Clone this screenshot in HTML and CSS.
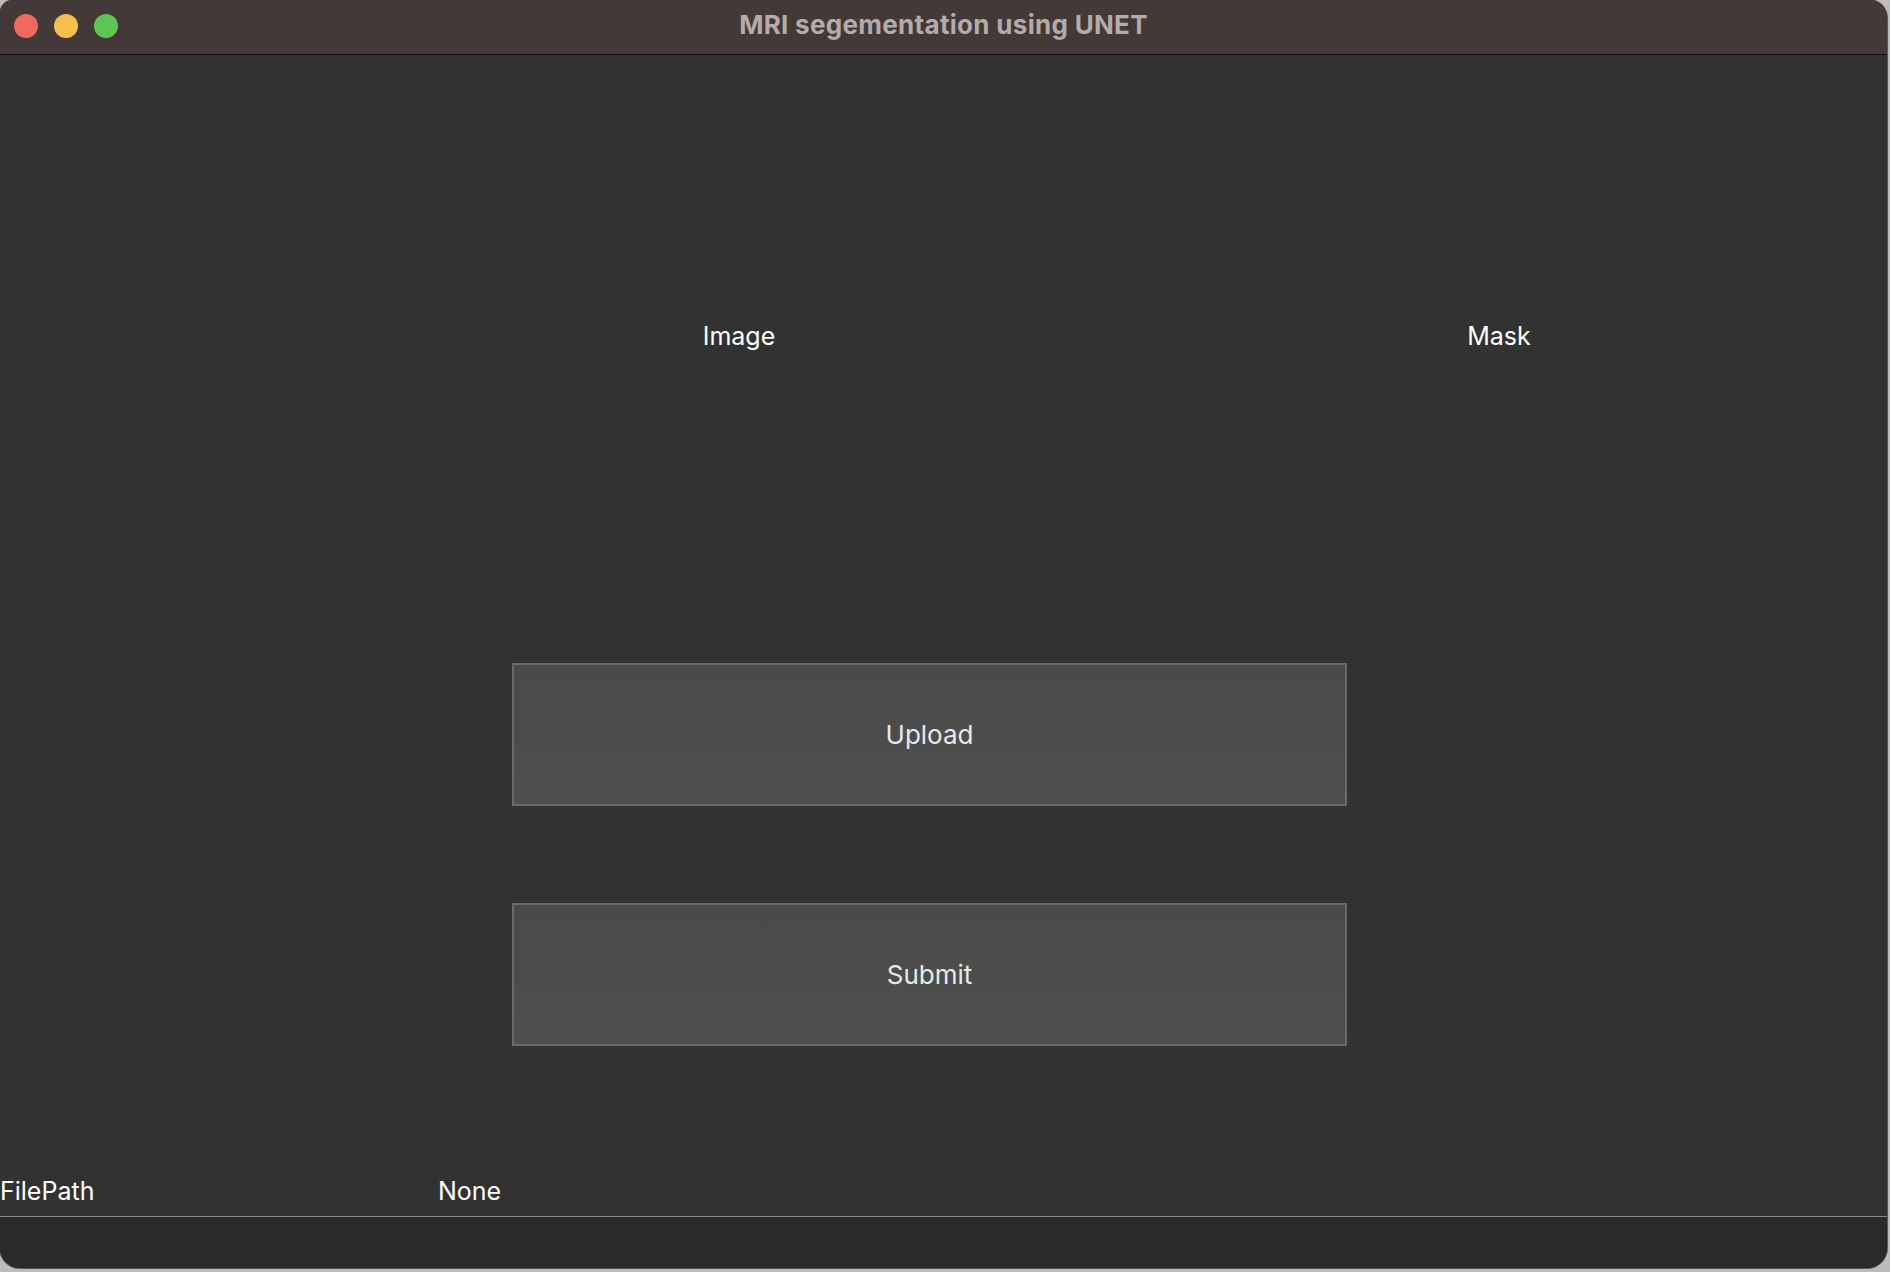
FILE: index.html
```html
<!DOCTYPE html>
<html>
<head>
<meta charset="utf-8">
<title>MRI segementation using UNET</title>
<link rel="stylesheet" href="styles.css">
</head>
<body>
<div class="window">
  <div class="titlebar">
    <div class="lights">
      <span class="light red"></span>
      <span class="light yellow"></span>
      <span class="light green"></span>
    </div>
    <div class="title">MRI segementation using UNET</div>
  </div>
  <div class="content">
    <div class="labels">
      <span class="spacer"></span>
      <span class="label">Image</span>
      <span class="spacer"></span>
      <span class="label">Mask</span>
    </div>
    <div class="btn upload">Upload</div>
    <div class="btn submit">Submit</div>
    <div class="pathrow">
      <span class="pathkey">FilePath</span>
      <span class="pathval">None</span>
    </div>
  </div>
  <div class="statusbar"></div>
</div>
</body>
</html>
```

FILE: styles.css
```css
html, body {
  margin: 0;
  padding: 0;
  background: #bcbcbc;
  width: 1890px;
  height: 1272px;
  overflow: hidden;
  font-family: Inter, "Noto Sans", "DejaVu Sans", sans-serif;
}

.window {
  width: 1887px;
  height: 1268px;
  border-radius: 14px 18px 20px 20px;
  overflow: hidden;
  display: flex;
  flex-direction: column;
  background: #323232;
  box-shadow: 0 0 0 1px #5a5a5a;
}

.titlebar {
  position: relative;
  height: 54px;
  flex: 0 0 54px;
  background: #423938;
  border-bottom: 1px solid #111111;
  display: flex;
  align-items: center;
  justify-content: center;
}

.lights {
  position: absolute;
  left: 14px;
  top: 14px;
  display: flex;
  gap: 16px;
}

.light {
  width: 24px;
  height: 24px;
  border-radius: 50%;
  display: block;
}

.red { background: #ee6a5f; }
.yellow { background: #f5bf4f; }
.green { background: #5ec453; }

.title {
  color: #b4acaa;
  font-weight: 700;
  font-size: 26px;
  letter-spacing: 0.3px;
  margin-top: -6px;
}

.content {
  flex: 1 1 auto;
  display: flex;
  flex-direction: column;
  color: #ffffff;
}

.labels {
  margin-top: 266px;
  display: grid;
  grid-template-columns: 639px 200px 560px 200px;
  font-size: 25px;
  line-height: 30px;
}

.label {
  text-align: center;
}

.btn {
  margin-left: 512px;
  width: 831px;
  height: 139px;
  border: 2px solid #6a6a6a;
  background: linear-gradient(#4a4a4a, #4f4f4f);
  color: #e8e8e8;
  font-size: 26px;
  display: flex;
  align-items: center;
  justify-content: center;
}

.upload {
  margin-top: 312px;
}

.submit {
  margin-top: 97px;
}

.pathrow {
  margin-top: 130px;
  display: flex;
  font-size: 25px;
  line-height: 30px;
}

.pathkey {
  width: 438px;
}

.statusbar {
  flex: 0 0 51px;
  border-top: 1px solid #8a8a8a;
  background: #2a2a2a;
}
```
